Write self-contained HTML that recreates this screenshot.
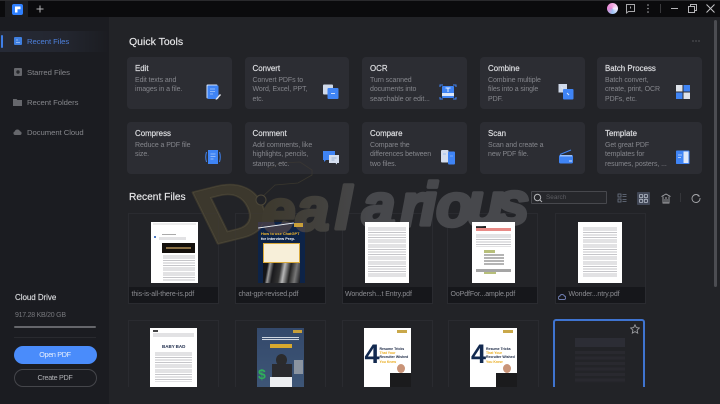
<!DOCTYPE html>
<html><head><meta charset="utf-8"><style>
*{box-sizing:border-box;margin:0;padding:0}
html,body{width:720px;height:404px;overflow:hidden;background:#222327;font-family:"Liberation Sans",sans-serif}
#root{position:absolute;left:0;top:0;width:720px;height:404px;overflow:hidden;filter:blur(.25px)}
.a{position:absolute}
#bar{left:0;top:0;width:720px;height:17px;background:#0b0b0d;border-top:1px solid #2a2a2d}
#side{left:0;top:17px;width:109px;height:387px;background:#1b1c21}
.nav{position:absolute;left:27px;font-size:7.7px;letter-spacing:-.05px;color:#85868b;line-height:10px;white-space:nowrap}
.card{position:absolute;width:104.500px;height:51.500px;background:#2c2d33;border-radius:4px;padding:7px 8px 0 8px}
.card b{display:block;font-weight:normal;font-size:7.900px;line-height:10px;color:#dcdde0;white-space:nowrap;-webkit-text-stroke:.2px #dcdde0}
.card p{font-size:7px;letter-spacing:-.08px;line-height:9.500px;color:#85868c;margin-top:1.500px;white-space:nowrap}
.card svg{position:absolute;left:77px;top:26px;width:18px;height:18px}
.f{position:absolute;width:91px;height:91px;border:1px solid #2a2b30}
.lbl{position:absolute;left:0;right:0;bottom:0;height:16px;background:#16171b;font-size:7px;letter-spacing:-.1px;line-height:16px;color:#8b8c91;padding-left:2.500px;white-space:nowrap}
.th{position:absolute;left:22px;top:8px;width:47px;height:61px;background:#fff;overflow:hidden}
.ln{position:absolute;left:5px;right:5px;background:repeating-linear-gradient(#c6c6ca 0 .7px,#fff .7px 1.700px)}
</style></head><body><div id="root">
<div class="a" id="bar"></div>
<div class="a" style="left:5px;top:1px;width:23px;height:16px;background:#1c1d21"></div>
<svg class="a" style="left:12px;top:4px" width="11" height="11" viewBox="0 0 11 11"><rect width="11" height="11" rx="2" fill="#2f80ff"/><path d="M3 2.500h5.500v2.800H5.500V8.500H3z" fill="#fff"/></svg>
<svg class="a" style="left:35px;top:4px" width="10" height="10" viewBox="0 0 10 10"><path d="M5 1.500v7M1.500 5h7" stroke="#b5b5b8" stroke-width="1"/></svg>
<div class="a" style="left:607px;top:3px;width:11px;height:11px;border-radius:50%;background:conic-gradient(#f3a6e0,#f7f0ff,#9cc4f5,#e58ad6,#f3a6e0)"></div>
<svg class="a" style="left:625px;top:3px" width="11" height="11" viewBox="0 0 11 11" fill="none" stroke="#a8a8ab"><path d="M1.500 1.500h8v7h-6l-2 1.500z"/><path d="M5.500 3.500v2"/></svg>
<svg class="a" style="left:646px;top:3px" width="4" height="11" viewBox="0 0 4 11" fill="#a8a8ab"><circle cx="2" cy="2" r=".8"/><circle cx="2" cy="5.500" r=".8"/><circle cx="2" cy="9" r=".8"/></svg>
<div class="a" style="left:660px;top:4px;width:1px;height:9px;background:#3a3a3d"></div>
<div class="a" style="left:671px;top:8px;width:7px;height:1px;background:#b5b5b8"></div>
<svg class="a" style="left:687px;top:3px" width="11" height="11" viewBox="0 0 11 11" fill="none" stroke="#b5b5b8"><rect x="1.500" y="3.500" width="6" height="6"/><path d="M3.500 3.500v-2h6v6h-2"/></svg>
<svg class="a" style="left:705px;top:3px" width="11" height="11" viewBox="0 0 11 11" fill="none" stroke="#c5c5c8"><path d="M1.500 1.500l8 8M9.500 1.500l-8 8"/></svg>

<div class="a" id="side"></div>
<div class="a" style="left:0;top:31px;width:109px;height:21px;background:linear-gradient(90deg,#262a36,#23262f 60%,#1b1c21)"></div>
<div class="a" style="left:1px;top:35px;width:2px;height:13px;background:#3f7fe8;border-radius:1px"></div>
<svg class="a" style="left:14px;top:37px" width="8" height="8"><rect width="8" height="8" rx="1" fill="#3f7fe0"/><path d="M2 5.500h4M2 3h2" stroke="#a9c6f5" stroke-width=".8"/></svg>
<div class="nav" style="top:37px;color:#4d80dc">Recent Files</div>
<svg class="a" style="left:14px;top:68px" width="8" height="8"><rect width="8" height="8" rx="1" fill="#66676c"/><circle cx="4" cy="4" r="1.700" fill="#27282c"/></svg>
<div class="nav" style="top:67.500px">Starred Files</div>
<svg class="a" style="left:13px;top:98px" width="9" height="8"><path d="M0 1h3.500l1 1H9v6H0z" fill="#66676c"/></svg>
<div class="nav" style="top:98px">Recent Folders</div>
<svg class="a" style="left:13px;top:128px" width="9" height="8"><path d="M2 7a1.800 1.800 0 0 1-.3-3.500A2.800 2.800 0 0 1 7 3.300 1.900 1.900 0 0 1 7.200 7z" fill="#66676c"/></svg>
<div class="nav" style="top:128px">Document Cloud</div>
<div class="nav" style="left:15px;top:293px;color:#d8d9dc;font-size:8px;-webkit-text-stroke:.15px #d8d9dc">Cloud Drive</div>
<div class="nav" style="left:15px;top:311px;font-size:7px;letter-spacing:-.25px;color:#77787d">917.28 KB/20 GB</div>
<div class="a" style="left:14px;top:326px;width:82px;height:2px;background:#65666b;border-radius:1px"></div>
<div class="a" style="left:14px;top:337px;width:82px;height:1px;background:#292a2f"></div>
<div class="a" style="left:13.500px;top:346px;width:83px;height:17.500px;background:#4a8cfb;border-radius:9px;text-align:center;font-size:7.200px;letter-spacing:-.3px;line-height:17.500px;color:#e9f0fd">Open PDF</div>
<div class="a" style="left:13.500px;top:369px;width:83px;height:17.500px;border:1px solid #45464b;border-radius:9px;text-align:center;font-size:7.200px;letter-spacing:-.3px;line-height:15.500px;color:#b0b1b5">Create PDF</div>

<div class="a" style="left:129px;top:35px;font-size:10.500px;line-height:14px;color:#e9e9eb;-webkit-text-stroke:.15px #e9e9eb">Quick Tools</div>
<svg class="a" style="left:692px;top:39px" width="9" height="4" fill="#77787c"><circle cx="1" cy="2" r=".6"/><circle cx="4" cy="2" r=".6"/><circle cx="7" cy="2" r=".6"/></svg>

<div class="card" style="left:127px;top:57px"><b>Edit</b><p>Edit texts and<br>images in a file.</p>
<svg viewBox="0 0 18 18"><rect x="2.500" y="1.500" width="11" height="14" rx="1" fill="#cfe0fb"/><rect x="3.500" y="2.500" width="11" height="13.500" rx="1" fill="#3f84f5"/><path d="M6 6h5M6 8.500h5M6 11h3" stroke="#a9c9fb" stroke-width=".8"/><path d="M12 15.500l4-4.500 1 1-4 4.500-1.500.2z" fill="#e6e9ef"/></svg></div>
<div class="card" style="left:244.500px;top:57px"><b>Convert</b><p>Convert PDFs to<br>Word, Excel, PPT,<br>etc.</p>
<svg viewBox="0 0 18 18"><rect x="1" y="1.500" width="10" height="10" rx="1" fill="#cfd9ea"/><rect x="5.500" y="5" width="11" height="11" rx="1" fill="#3f84f5"/><path d="M9 10.500h4" stroke="#cfe0fb"/></svg></div>
<div class="card" style="left:362px;top:57px"><b>OCR</b><p>Turn scanned<br>documents into<br>searchable or edit...</p>
<svg viewBox="0 0 18 18"><path d="M1 4V2h3M14 2h3v2M1 14v2h3M14 16h3v-2" stroke="#3f84f5" fill="none"/><rect x="3" y="3" width="12" height="12" rx="1" fill="#3f84f5"/><rect x="3" y="10" width="12" height="3" fill="#dbe7fb"/><path d="M6.500 5h5M9 5v4" stroke="#e5effd"/></svg></div>
<div class="card" style="left:480px;top:57px"><b>Combine</b><p>Combine multiple<br>files into a single<br>PDF.</p>
<svg viewBox="0 0 18 18"><rect x="1.500" y="1" width="8.500" height="8.500" fill="#cfd9ea"/><rect x="6" y="6" width="10.500" height="10.500" rx="1" fill="#3f84f5"/><path d="M4 3.500l2 2M10 10l2 2" stroke="#dbe7fb"/></svg></div>
<div class="card" style="left:597px;top:57px"><b>Batch Process</b><p>Batch convert,<br>create, print, OCR<br>PDFs, etc.</p>
<svg viewBox="0 0 18 18"><rect x="2" y="2" width="6.500" height="6.500" fill="#dfe3ea"/><rect x="9.500" y="2" width="6.500" height="6.500" fill="#3f84f5"/><rect x="2" y="9.500" width="6.500" height="6.500" fill="#3f84f5"/><rect x="9.500" y="9.500" width="6.500" height="6.500" fill="#dfe3ea"/></svg></div>

<div class="card" style="left:127px;top:122px"><b>Compress</b><p>Reduce a PDF file<br>size.</p>
<svg viewBox="0 0 18 18"><rect x="4" y="2" width="10" height="14" fill="#3f84f5"/><path d="M6.500 6h5M6.500 8.500h5M6.500 11h3" stroke="#a9c9fb" stroke-width=".8"/><path d="M2.500 4Q1 9 2.500 14M15.500 4Q17 9 15.500 14" stroke="#3f84f5" fill="none"/></svg></div>
<div class="card" style="left:244.500px;top:122px"><b>Comment</b><p>Add comments, like<br>highlights, pencils,<br>stamps, etc.</p>
<svg viewBox="0 0 18 18"><path d="M1 3h12v9H4l-2 2v-2H1z" fill="#3f84f5"/><path d="M7 7h10v8h-2v1.500L13.500 15H7z" fill="#d5deee"/><path d="M9.500 10h5M9.500 12h3" stroke="#8fa6c9" stroke-width=".7"/></svg></div>
<div class="card" style="left:362px;top:122px"><b>Compare</b><p>Compare the<br>differences between<br>two files.</p>
<svg viewBox="0 0 18 18"><rect x="2" y="2" width="7.500" height="12.500" rx="1" fill="#d5deee"/><rect x="9" y="3.500" width="7" height="13" rx="1" fill="#3f84f5"/><path d="M4 6h3M11 8h3" stroke="#8fb4f5" stroke-width=".8"/></svg></div>
<div class="card" style="left:480px;top:122px"><b>Scan</b><p>Scan and create a<br>new PDF file.</p>
<svg viewBox="0 0 18 18"><path d="M3 6.500L14 2" stroke="#3f84f5" fill="none"/><rect x="2" y="7" width="14" height="8.500" rx="1.500" fill="#3f84f5"/><rect x="3" y="7" width="12" height="1.500" fill="#9cc0f8"/><path d="M12 13h3" stroke="#cfe0fb"/></svg></div>
<div class="card" style="left:597px;top:122px"><b>Template</b><p>Get great PDF<br>templates for<br>resumes, posters, ...</p>
<svg viewBox="0 0 18 18"><rect x="2" y="2.500" width="13.500" height="13.500" rx=".8" fill="#3f84f5"/><rect x="9.500" y="3.500" width="5" height="11.500" fill="#dfe8f8"/><path d="M4 7h4M4 9.500h3" stroke="#cfe0fb" stroke-width=".8"/></svg></div>

<div class="a" style="left:129px;top:191px;font-size:10.200px;line-height:14px;color:#e9e9eb;-webkit-text-stroke:.15px #e9e9eb">Recent Files</div>

<div class="a" style="left:531px;top:191px;width:76px;height:13px;border:1px solid #47484d;border-radius:1px;background:#26272b"></div>
<svg class="a" style="left:533px;top:192.500px" width="10" height="10" viewBox="0 0 10 10" fill="none" stroke="#b5b6b9"><circle cx="4.500" cy="4.500" r="3.200"/><path d="M7 7l2 2"/></svg>
<div class="a" style="left:546px;top:193px;font-size:6.400px;line-height:10px;color:#5b5c61">Search</div>
<svg class="a" style="left:617px;top:192px" width="10" height="12" viewBox="0 0 10 12" fill="none" stroke="#6d7787" stroke-width=".8"><rect x="1" y="2" width="3" height="3"/><rect x="1" y="7" width="3" height="3"/><path d="M5.500 2.500h4M5.500 4.500h4M5.500 7.500h4M5.500 9.500h4"/></svg>
<div class="a" style="left:637px;top:192px;width:13px;height:13px;background:#424857;border-radius:1px"></div>
<svg class="a" style="left:639px;top:194px" width="9" height="9" viewBox="0 0 9 9" fill="none" stroke="#b8bfcc" stroke-width=".8"><rect x=".5" y=".5" width="3.200" height="3.200" rx=".6"/><rect x="5.300" y=".5" width="3.200" height="3.200" rx=".6"/><rect x=".5" y="5.300" width="3.200" height="3.200" rx=".6"/><rect x="5.300" y="5.300" width="3.200" height="3.200" rx=".6"/></svg>
<svg class="a" style="left:661px;top:193px" width="10" height="11" viewBox="0 0 10 11" fill="none" stroke="#a5a6aa" stroke-width=".9"><path d="M.5 3.500L5 1l4.500 2.500M2 3.500V10h6V3.500M4 6v4M6 6v4M4 5h2"/></svg>
<div class="a" style="left:680px;top:193px;width:1px;height:9px;background:#35363a"></div>
<svg class="a" style="left:691px;top:193px" width="10" height="10" viewBox="0 0 10 10" fill="none" stroke="#a5a6aa" stroke-width=".9"><path d="M8.500 3.500A4 4 0 1 0 9 5M6.500 2.500l2 1"/></svg>

<div class="f" style="left:128px;top:213px"><div class="th"><div class="a" style="left:2px;top:1px;right:2px;height:2px;background:#ececec"></div><div class="a" style="left:11px;top:12px;width:14px;height:1px;background:#aaa"></div><div class="a" style="left:3px;top:14px;width:2px;height:2px;background:#4979c4"></div><div class="ln" style="left:8px;right:12px;top:15px;height:3px"></div><div class="a" style="left:11px;top:21px;width:33px;height:10px;background:#14100c"></div><div class="a" style="left:15px;top:25px;width:25px;height:2px;background:#8a7045"></div><div class="ln" style="left:12px;right:3px;top:33px;height:26px"></div></div><div class="lbl">this-is-all-there-is.pdf</div></div>

<div class="f" style="left:235px;top:213px"><div class="th" style="background:#0d2347"><div class="a" style="left:0;top:3px;width:36px;height:1px;background:#e8e8e8;transform:rotate(-8deg)"></div><div class="a" style="right:2px;top:1px;width:9px;height:4px;background:#c89f3a"></div><div class="a" style="left:3px;top:9px;font-size:3.900px;line-height:5px;font-weight:bold;color:#f4b82e;white-space:nowrap">How to use ChatGPT</div><div class="a" style="left:3px;top:14px;font-size:3.900px;line-height:5px;font-weight:bold;color:#fff;white-space:nowrap">for Interview Prep.</div><div class="a" style="left:5px;top:21px;width:37px;height:20px;background:#f7efd9;border:1px solid #d9a93a"></div><div class="a" style="left:5px;top:41px;width:37px;height:20px;background:linear-gradient(100deg,#141518 0 12%,#9a9a9a 18%,#1a1a1d 28%,#333 45%,#b8b8b8 55%,#222 70%,#777 85%,#15161a)"></div></div><div class="lbl">chat-gpt-revised.pdf</div></div>

<div class="f" style="left:341.500px;top:213px"><div class="th" style="left:22.500px;width:43.500px"><div class="ln" style="left:3px;right:3px;top:5px;height:50px"></div></div><div class="lbl">Wondersh...t Entry.pdf</div></div>

<div class="f" style="left:447px;top:213px"><div class="th" style="left:24px;width:43px"><div class="a" style="left:4px;top:4px;width:10px;height:2px;background:#222"></div><div class="a" style="left:4px;top:6px;right:4px;height:3px;background:#e88a86"></div><div class="ln" style="left:4px;right:4px;top:12px;height:13px"></div><div class="a" style="left:12px;top:28px;width:11px;height:3px;background:#b7bf7a"></div><div class="a" style="left:12px;top:32px;width:20px;height:12px;background:repeating-linear-gradient(#b4b4b4 0 2px,#fff 2px 3px)"></div><div class="a" style="left:4px;top:47px;right:4px;height:3px;background:#a5a5a5"></div><div class="a" style="left:12px;top:50px;width:12px;height:2px;background:#b7bf7a"></div></div><div class="lbl">OoPdfFor...ample.pdf</div></div>

<div class="f" style="left:554.500px;top:213px"><div class="th" style="left:22px;width:44px"><div class="ln" style="left:5px;right:5px;top:5px;height:50px"></div></div><div class="lbl" style="padding-left:13px">Wonder...ntry.pdf</div><svg class="a" style="left:2px;bottom:3px" width="8" height="7"><path d="M2 6.500a1.600 1.600 0 0 1-.3-3.200A2.500 2.500 0 0 1 6.400 3 1.800 1.800 0 0 1 6.300 6.500z" fill="none" stroke="#6f7db0"/></svg></div>

<div class="a" style="left:110px;top:319px;width:605px;height:68px;overflow:hidden">
<div class="f" style="left:18px;top:1px"><div class="th" style="left:21px;top:7px"><div class="a" style="left:3px;top:2px;width:5px;height:2px;background:#444"></div><div class="ln" style="left:3px;right:3px;top:5px;height:4px"></div><div class="a" style="left:12px;top:16px;font-size:4.500px;line-height:5px;font-weight:bold;color:#1c2a4a">BABY&#8201;BAD</div><div class="ln" style="left:5px;right:5px;top:24px;height:30px"></div></div></div>
<div class="f" style="left:125px;top:1px"><div class="th" style="left:21px;top:7px;background:linear-gradient(#34496b,#3e5677)"><div class="a" style="right:2px;top:2px;width:9px;height:3px;background:#c89f3a"></div><div class="ln" style="left:5px;right:5px;top:9px;height:4px;background:repeating-linear-gradient(#cfd6e0 0 .8px,#3a4f70 .8px 2px)"></div><div class="a" style="left:13px;top:16px;width:22px;height:4px;background:#d8a92e"></div><div class="a" style="left:19px;top:26px;width:11px;height:12px;border-radius:50%;background:#2b2b2d"></div><div class="a" style="left:15px;top:36px;width:20px;height:20px;background:#2a2a2e"></div><div class="a" style="left:13px;top:49px;width:22px;height:14px;background:#eceef1"></div><div class="a" style="left:1px;top:38px;font-size:14px;line-height:16px;font-weight:bold;color:#2fb05a">$</div><div class="a" style="right:1px;top:32px;width:9px;height:14px;background:#8b94a0"></div></div></div>
<div class="f" style="left:231.500px;top:1px"><div class="th" style="left:21px;top:7px"><div class="a" style="right:4px;top:2px;width:10px;height:3px;background:#c9a84a"></div><div class="a" style="left:1px;top:13px;font-size:27px;line-height:27px;font-weight:bold;color:#12294f">4</div><div class="a" style="left:16px;top:19px;font-size:3.500px;line-height:4.200px;font-weight:bold;color:#14223f;white-space:nowrap">Resume Tricks<br><span style="color:#e9ac20">That Your</span><br>Recruiter Wished<br><span style="color:#e9ac20">You Knew</span></div><div class="a" style="left:33px;top:36px;width:8px;height:9px;border-radius:50%;background:#c99478"></div><div class="a" style="left:26px;top:45px;width:21px;height:16px;background:#1b1b1d"></div></div></div>
<div class="f" style="left:337.500px;top:1px"><div class="th" style="left:21.500px;top:7px"><div class="a" style="right:4px;top:2px;width:10px;height:3px;background:#c9a84a"></div><div class="a" style="left:1px;top:13px;font-size:27px;line-height:27px;font-weight:bold;color:#12294f">4</div><div class="a" style="left:16px;top:19px;font-size:3.500px;line-height:4.200px;font-weight:bold;color:#14223f;white-space:nowrap">Resume Tricks<br><span style="color:#e9ac20">That Your</span><br>Recruiter Wished<br><span style="color:#e9ac20">You Knew</span></div><div class="a" style="left:33px;top:36px;width:8px;height:9px;border-radius:50%;background:#c99478"></div><div class="a" style="left:26px;top:45px;width:21px;height:16px;background:#1b1b1d"></div></div></div>
<div class="a" style="left:443px;top:0;width:92px;height:90px;border:2px solid #3f74d0;border-radius:3px"><div class="a" style="left:20px;top:17px;width:50px;height:9px;background:#2c2d35"></div><div class="a" style="left:20px;top:30px;width:50px;height:32px;background:repeating-linear-gradient(#29292f 0 3px,#232428 3px 5.500px)"></div></div>
<svg class="a" style="left:520px;top:5px" width="10" height="10" viewBox="0 0 10 10" fill="none" stroke="#9a9b9f" stroke-width=".9"><path d="M5 .8l1.300 2.800 3 .4-2.200 2.100.6 3L5 7.600 2.300 9.100l.6-3L.7 4l3-.4z"/></svg>
</div>

<div class="a" style="left:714px;top:20px;width:3px;height:267px;background:#4c4d52;border-radius:2px"></div>

<svg class="a" style="left:0;top:0;mix-blend-mode:lighten" width="720" height="404" viewBox="0 0 720 404">
<defs><linearGradient id="g" gradientUnits="userSpaceOnUse" x1="270" y1="0" x2="370" y2="0"><stop offset="0" stop-color="#3e3a2f"/><stop offset="1" stop-color="#47484c"/></linearGradient></defs>
<path d="M261 198L275 185 298 183 312 175 312 170 300 162 280 163 267 170" fill="none" stroke="#3a372e" stroke-width=".8"/>
<g font-family="Liberation Sans" font-weight="bold">
<text transform="matrix(.91 -.227 .363 .741 212 245)" font-size="100" fill="#3c382d" stroke="#3c382d" stroke-width="3" stroke-linejoin="round">D</text>
<text transform="matrix(.91 -.227 .363 .741 212 245)" font-size="100" fill="none" stroke="#4d4839" stroke-width=".8">D</text>
<text font-style="italic" font-size="60" fill="url(#g)" stroke="url(#g)" stroke-width="3.500" stroke-linejoin="round" x="262 296 335 362 400 420 436 467 496" y="232 230 229 226 226 225 226 225 224">ealarious</text>
</g>
<circle cx="261" cy="200" r="5" fill="#222327" stroke="#4d4839" stroke-width="1"/>
</svg>
</div></body></html>
